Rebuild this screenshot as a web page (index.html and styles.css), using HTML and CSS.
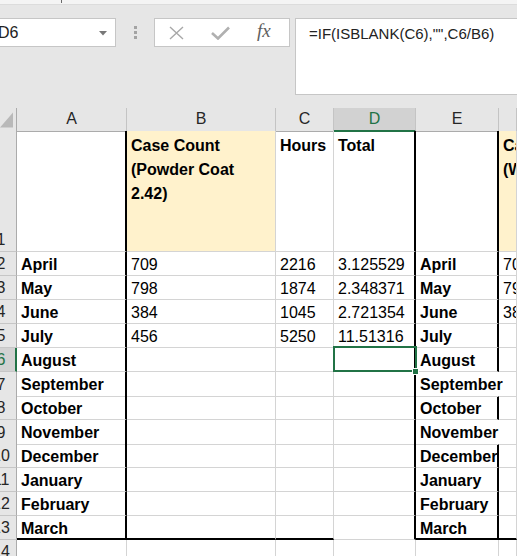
FILE: index.html
```html
<!DOCTYPE html>
<html lang="en">
<head>
    <meta charset="UTF-8">
    <title>Case Count sheet</title>
    <link rel="stylesheet" href="styles.css">
</head>
<body>
    <div class="topbar"><span class="tick"></span></div>

    <!-- formula bar -->
    <div class="fbar">
        <div class="namebox">
            <span>D6</span>
            <svg class="caret" width="8" height="5" viewBox="0 0 8 5"><polygon points="0,0 8,0 4,4.5" fill="#777"/></svg>
        </div>
        <div class="grip"><i></i><i></i><i></i></div>
        <div class="fbuttons">
            <svg width="18" height="14" viewBox="0 0 18 14"><path d="M2 1 L15 13 M15 1 L2 13" stroke="#a8a8a8" stroke-width="1.4" fill="none"/></svg>
            <svg width="20" height="14" viewBox="0 0 20 14"><path d="M1 7 L7 12.5 L18 1.5" stroke="#b0b0b0" stroke-width="2.6" fill="none"/></svg>
            <span class="fx">fx</span>
        </div>
        <div class="formula">=IF(ISBLANK(C6),"",C6/B6)</div>
    </div>

    <!-- sheet -->
    <div class="sheet">
        <div class="row head">
            <div class="corner"><svg width="14" height="16" viewBox="0 0 14 16"><polygon points="14,0 14,16 0,16" fill="#b9b9b9"/></svg></div>
            <div class="ch">A</div>
            <div class="ch">B</div>
            <div class="ch">C</div>
            <div class="ch sel">D</div>
            <div class="ch">E</div>
            <div class="ch"></div>
        </div>

        <div class="row first">
            <div class="rh"><span>1</span></div>
            <div class="c tr"></div>
            <div class="c b fill">Case Count<br>(Powder Coat<br>2.42)</div>
            <div class="c b">Hours</div>
            <div class="c b tr">Total</div>
            <div class="c tr"></div>
            <div class="c b fill">Case Count<br>(W</div>
        </div>

        <div class="row">
            <div class="rh"><span>2</span></div>
            <div class="c b tr">April</div>
            <div class="c">709</div>
            <div class="c">2216</div>
            <div class="c tr">3.125529</div>
            <div class="c b tr">April</div>
            <div class="c">709</div>
        </div>
        <div class="row">
            <div class="rh"><span>3</span></div>
            <div class="c b tr">May</div>
            <div class="c">798</div>
            <div class="c">1874</div>
            <div class="c tr">2.348371</div>
            <div class="c b tr">May</div>
            <div class="c">798</div>
        </div>
        <div class="row">
            <div class="rh"><span>4</span></div>
            <div class="c b tr">June</div>
            <div class="c">384</div>
            <div class="c">1045</div>
            <div class="c tr">2.721354</div>
            <div class="c b tr">June</div>
            <div class="c">384</div>
        </div>
        <div class="row">
            <div class="rh"><span>5</span></div>
            <div class="c b tr">July</div>
            <div class="c">456</div>
            <div class="c">5250</div>
            <div class="c tr">11.51316</div>
            <div class="c b tr">July</div>
            <div class="c"></div>
        </div>
        <div class="row">
            <div class="rh sel"><span>6</span></div>
            <div class="c b tr">August</div>
            <div class="c"></div>
            <div class="c"></div>
            <div class="c tr active"></div>
            <div class="c b tr">August</div>
            <div class="c"></div>
        </div>
        <div class="row">
            <div class="rh"><span>7</span></div>
            <div class="c b tr">September</div>
            <div class="c"></div>
            <div class="c"></div>
            <div class="c tr"></div>
            <div class="c b spill">September</div>
            <div class="c"></div>
        </div>
        <div class="row">
            <div class="rh"><span>8</span></div>
            <div class="c b tr">October</div>
            <div class="c"></div>
            <div class="c"></div>
            <div class="c tr"></div>
            <div class="c b tr">October</div>
            <div class="c"></div>
        </div>
        <div class="row">
            <div class="rh"><span>9</span></div>
            <div class="c b tr">November</div>
            <div class="c"></div>
            <div class="c"></div>
            <div class="c tr"></div>
            <div class="c b spill">November</div>
            <div class="c"></div>
        </div>
        <div class="row">
            <div class="rh"><span>10</span></div>
            <div class="c b tr">December</div>
            <div class="c"></div>
            <div class="c"></div>
            <div class="c tr"></div>
            <div class="c b tr">December</div>
            <div class="c"></div>
        </div>
        <div class="row">
            <div class="rh"><span>11</span></div>
            <div class="c b tr">January</div>
            <div class="c"></div>
            <div class="c"></div>
            <div class="c tr"></div>
            <div class="c b tr">January</div>
            <div class="c"></div>
        </div>
        <div class="row">
            <div class="rh"><span>12</span></div>
            <div class="c b tr">February</div>
            <div class="c"></div>
            <div class="c"></div>
            <div class="c tr"></div>
            <div class="c b tr">February</div>
            <div class="c"></div>
        </div>
        <div class="row">
            <div class="rh"><span>13</span></div>
            <div class="c b tr tb">March</div>
            <div class="c tb"></div>
            <div class="c tb"></div>
            <div class="c tr"></div>
            <div class="c b tr tb">March</div>
            <div class="c tb"></div>
        </div>
        <div class="row">
            <div class="rh"><span>14</span></div>
            <div class="c"></div>
            <div class="c"></div>
            <div class="c"></div>
            <div class="c"></div>
            <div class="c"></div>
            <div class="c"></div>
        </div>
    </div>
</body>
</html>
```

FILE: styles.css
```css
html, body {
    margin: 0;
    height: 556px;
    overflow: hidden;
}

body {
    font-family: "Liberation Sans", Arial, sans-serif;
    background: #ffffff;
    color: #000;
}

/* top strip of the ribbon */
.topbar {
    height: 5px;
    background: #f4f4f4;
    border-bottom: 1px solid #dcdcdc;
    box-sizing: border-box;
    padding-left: 61px;
}

.tick {
    display: block;
    width: 1px;
    height: 3px;
    background: #6a6a6a;
}

/* formula bar */
.fbar {
    height: 103px;
    background: #e6e6e6;
    display: flex;
    align-items: flex-start;
    padding-top: 13px;
    box-sizing: border-box;
}

.namebox {
    margin-left: -6px;
    width: 122px;
    height: 29px;
    box-sizing: border-box;
    background: #fff;
    border: 1px solid #c6c6c6;
    display: flex;
    align-items: center;
    justify-content: space-between;
    padding: 0 8px 0 3px;
    font-size: 16px;
    color: #222;
}

.caret {
    margin-top: 1px;
}

.grip {
    margin-left: 18px;
    margin-top: 8px;
    display: flex;
    flex-direction: column;
    gap: 2px;
}

.grip i {
    display: block;
    width: 3px;
    height: 3px;
    background: #a3a3a3;
}

.fbuttons {
    margin-left: 17px;
    width: 136px;
    height: 29px;
    box-sizing: border-box;
    background: #fff;
    border: 1px solid #c6c6c6;
    display: flex;
    align-items: center;
    padding-left: 13px;
    gap: 25px;
}

.fx {
    font-family: "Liberation Serif", "Times New Roman", serif;
    font-style: italic;
    font-size: 19px;
    color: #606060;
    margin-left: 1px;
    margin-top: -3px;
}

.formula {
    margin-left: 5px;
    flex: 1;
    height: 77px;
    box-sizing: border-box;
    background: #fff;
    border: 1px solid #c6c6c6;
    border-right: none;
    padding: 6px 0 0 13px;
    font-size: 15px;
    color: #222;
}

/* sheet grid */
.row {
    display: grid;
    grid-template-columns: 17px 110px 149px 58px 82px 83px 1fr;
    height: 24px;
}

.row.head {
    height: 23px;
}

.row.first {
    height: 121px;
}

.corner {
    background: #e6e6e6;
    border-right: 1px solid #ababab;
    border-bottom: 1px solid #ababab;
    box-sizing: border-box;
    display: flex;
    align-items: flex-end;
    justify-content: flex-end;
    padding: 0 3px 3px 0;
}

.ch {
    background: #e6e6e6;
    border-right: 1px solid #c4c4c4;
    border-bottom: 1px solid #ababab;
    box-sizing: border-box;
    text-align: center;
    font-size: 16px;
    line-height: 22px;
    color: #262626;
}

.ch.sel {
    background: #d2d2d2;
    color: #217346;
    border-bottom: 2px solid #217346;
}

.rh {
    background: #e6e6e6;
    border-right: 1px solid #ababab;
    border-bottom: 1px solid #c6c6c6;
    box-sizing: border-box;
    overflow: hidden;
    display: flex;
    align-items: flex-end;
    font-size: 16px;
    line-height: 22px;
    color: #262626;
}

.rh span {
    display: block;
    flex: none;
    width: 32px;
    margin-left: -15px;
    text-align: center;
}

.rh.sel {
    background: #d2d2d2;
    color: #217346;
    border-right: 2px solid #217346;
}

.c {
    border-right: 1px solid #d4d4d4;
    border-bottom: 1px solid #d4d4d4;
    box-sizing: border-box;
    overflow: hidden;
    white-space: nowrap;
    font-size: 16px;
    line-height: 22px;
    padding: 2px 0 0 4px;
}

.first .c {
    line-height: 24px;
    padding-top: 3px;
}

.c.b {
    font-weight: bold;
}

.c.fill {
    background: #fff2cc;
}

.c.tr {
    border-right: 2px solid #000;
}

.c.tb {
    border-bottom: 2px solid #000;
}

.c.spill {
    overflow: visible;
    border-right: 1px solid transparent;
    position: relative;
    z-index: 1;
}

/* active cell D6 */
.c.active {
    position: relative;
    overflow: visible;
}

.c.active::after {
    content: "";
    position: absolute;
    top: -2px;
    left: -1px;
    right: -3px;
    bottom: -1px;
    border: 2px solid #217346;
}

.c.active::before {
    content: "";
    position: absolute;
    right: -5px;
    bottom: -4px;
    width: 5px;
    height: 5px;
    background: #217346;
    border: 1px solid #fff;
    z-index: 2;
}
```
